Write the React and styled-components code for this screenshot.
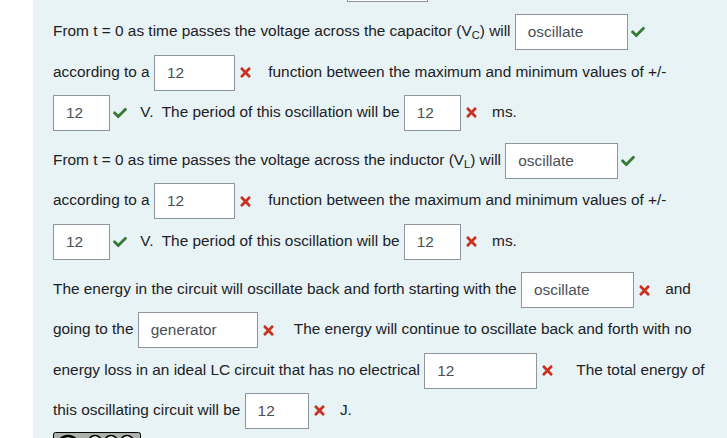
import React from 'react';
import styled, { createGlobalStyle } from 'styled-components';
import { FaCheck, FaTimes } from 'react-icons/fa';

const GlobalStyle = createGlobalStyle`
  html, body {
    margin: 0;
    padding: 0;
    background: #ffffff;
    overflow: hidden;
  }
  body {
    font-family: "Liberation Sans", Arial, sans-serif;
    color: #1d2125;
  }
`;

const Panel = styled.div`
  margin: -37px 0 0 33px;
  padding: 0 19px 0 20px;
  background: #e7f3f5;
  font-size: 15.4px;
  min-height: 480px;
`;

const Para = styled.p`
  margin: 0 0 ${(p) => (p.$last ? '2px' : '8px')};
  line-height: 40.3px;
`;

const Blank = styled.span`
  display: inline-block;
  box-sizing: border-box;
  width: ${(p) => p.$w}px;
  height: 36px;
  padding: 0 12px;
  margin: 0 1px 0 0;
  border: 1px solid #8f959e;
  background: #ffffff;
  color: #495057;
  line-height: 34px;
  vertical-align: middle;
  white-space: nowrap;
  overflow: hidden;
`;

const Mark = styled.span`
  display: inline-block;
  margin: 0 ${(p) => p.$after ?? 9}px 0 2px;
  color: ${(p) => (p.$ok ? '#357a32' : '#ca3120')};
  font-size: ${(p) => (p.$ok ? '14px' : '15px')};
  line-height: 1;
  vertical-align: middle;
  svg {
    display: block;
  }
`;

const Sub = styled.sub`
  font-size: 0.72em;
  vertical-align: -3px;
  line-height: 0;
`;

const Badge = styled.div`
  width: 88px;
  height: 31px;
  svg {
    display: block;
  }
`;

const Right = ({ after }) => (
  <Mark $ok $after={after}>
    <FaCheck />
  </Mark>
);

const Wrong = ({ after }) => (
  <Mark $after={after}>
    <FaTimes />
  </Mark>
);

const CcBadge = () => (
  <Badge>
    <svg width="88" height="31" viewBox="0 0 88 31">
      <rect x="0.5" y="0.5" width="87" height="30" rx="2" fill="#aab2ab" stroke="#000" />
      <rect x="2" y="2" width="84" height="27" rx="1" fill="#abb1aa" />
      <circle cx="15" cy="15" r="11" fill="#fff" stroke="#000" strokeWidth="2.5" />
      <circle cx="42" cy="10" r="6.5" fill="#fff" stroke="#000" strokeWidth="1.5" />
      <circle cx="58" cy="10" r="6.5" fill="#fff" stroke="#000" strokeWidth="1.5" />
      <circle cx="74" cy="10" r="6.5" fill="#fff" stroke="#000" strokeWidth="1.5" />
      <rect x="29" y="19" width="56" height="9" fill="#000" />
    </svg>
  </Badge>
);

export default function App() {
  return (
    <>
      <GlobalStyle />
      <Panel>
        <Para>
          The maximum charge on each capacitor is{' '}
          <Blank $w={81}>12</Blank>
        </Para>

        <Para>
          From t = 0 as time passes the voltage across the capacitor (V<Sub>C</Sub>) will{' '}
          <Blank $w={113}>oscillate</Blank>
          <Right /> according to a{' '}
          <Blank $w={81}>12</Blank>
          <Wrong after={11} /> function between the maximum and minimum values of +/-{' '}
          <Blank $w={57}>12</Blank>
          <Right /> V.&nbsp; The period of this oscillation will be{' '}
          <Blank $w={57}>12</Blank>
          <Wrong /> ms.
        </Para>

        <Para>
          From t = 0 as time passes the voltage across the inductor (V<Sub>L</Sub>) will{' '}
          <Blank $w={113}>oscillate</Blank>
          <Right /> according to a{' '}
          <Blank $w={81}>12</Blank>
          <Wrong after={11} /> function between the maximum and minimum values of +/-{' '}
          <Blank $w={57}>12</Blank>
          <Right /> V.&nbsp; The period of this oscillation will be{' '}
          <Blank $w={57}>12</Blank>
          <Wrong /> ms.
        </Para>

        <Para $last>
          The energy in the circuit will oscillate back and forth starting with the{' '}
          <Blank $w={113}>oscillate</Blank>
          <Wrong /> and going to the{' '}
          <Blank $w={120}>generator</Blank>
          <Wrong after={14} /> The energy will continue to oscillate back and forth with no energy
          loss in an ideal LC circuit that has no electrical{' '}
          <Blank $w={113}>12</Blank>
          <Wrong after={17} /> The total energy of this oscillating circuit will be{' '}
          <Blank $w={64}>12</Blank>
          <Wrong /> J.
        </Para>

        <CcBadge />
      </Panel>
    </>
  );
}
